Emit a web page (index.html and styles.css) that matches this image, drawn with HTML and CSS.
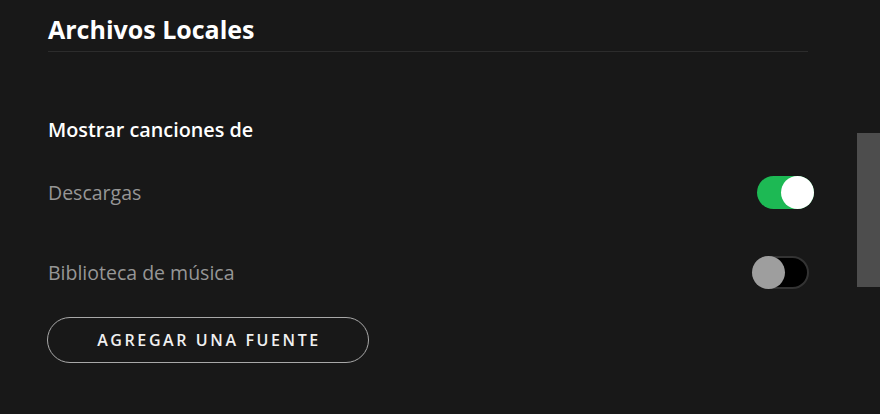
FILE: index.html
```html
<!DOCTYPE html>
<html lang="es">
<head>
<meta charset="utf-8">
<link rel="stylesheet" href="styles.css">
</head>
<body>
<div class="page">
  <main class="content">
    <h1 class="title">Archivos Locales</h1>
    <div class="divider"></div>
    <h2 class="subtitle">Mostrar canciones de</h2>
    <div class="row row-first">
      <span class="label">Descargas</span>
      <span class="toggle on"><span class="knob"></span></span>
    </div>
    <div class="row row-second">
      <span class="label">Biblioteca de música</span>
      <span class="toggle off"><span class="knob"></span></span>
    </div>
    <button class="btn">AGREGAR UNA FUENTE</button>
  </main>
  <div class="scrolltrack"><div class="thumb"></div></div>
</div>
</body>
</html>
```
FILE: styles.css
```css
html, body {
  margin: 0;
  padding: 0;
  background: #181818;
  height: 100%;
}
body {
  font-family: "Open Sans", "Noto Sans", sans-serif;
  color: #fff;
  overflow: hidden;
}
.page {
  display: flex;
  height: 414px;
}
.content {
  flex: 1;
  padding: 0 43px 0 48px;
  display: flex;
  flex-direction: column;
  align-items: stretch;
}
.title {
  margin: 14px 0 0 0;
  font-size: 25px;
  line-height: 30px;
  font-weight: 700;
  letter-spacing: 0;
}
.divider {
  height: 1px;
  background: #2c2c2c;
  margin-top: 7px;
  margin-right: 6px;
}
.subtitle {
  margin: 66px 0 0 0;
  font-size: 19.8px;
  line-height: 24px;
  font-weight: 600;
}
.row {
  display: flex;
  align-items: center;
  justify-content: space-between;
  height: 34px;
}
.row-first {
  margin-top: 33px;
  margin-right: 0;
}
.row-second {
  margin-top: 46px;
  margin-right: 5px;
}
.label {
  font-size: 19.5px;
  color: #969696;
}
.toggle {
  width: 57px;
  height: 33px;
  border-radius: 17px;
  box-sizing: border-box;
  display: flex;
  align-items: center;
}
.toggle.on {
  background: #1db954;
  justify-content: flex-end;
}
.toggle.on .knob {
  width: 33px;
  height: 33px;
  border-radius: 50%;
  background: #fff;
}
.toggle.off {
  background: #000;
  border: 2px solid #333;
  justify-content: flex-start;
}
.toggle.off .knob {
  width: 33px;
  height: 33px;
  margin-left: -2px;
  border-radius: 50%;
  background: #9e9e9e;
}
.btn {
  align-self: flex-start;
  margin-top: 28px;
  margin-left: -1px;
  width: 322px;
  height: 46px;
  border: 1.5px solid #a8a8a8;
  border-radius: 23px;
  background: transparent;
  color: #f0f0f0;
  font-family: "Open Sans", "Noto Sans", sans-serif;
  font-size: 16px;
  font-weight: 600;
  letter-spacing: 2.6px;
  padding: 0 0 0 2px;
}
.scrolltrack {
  width: 23px;
}
.thumb {
  margin-top: 133px;
  height: 154px;
  background: #4d4d4d;
}
```
